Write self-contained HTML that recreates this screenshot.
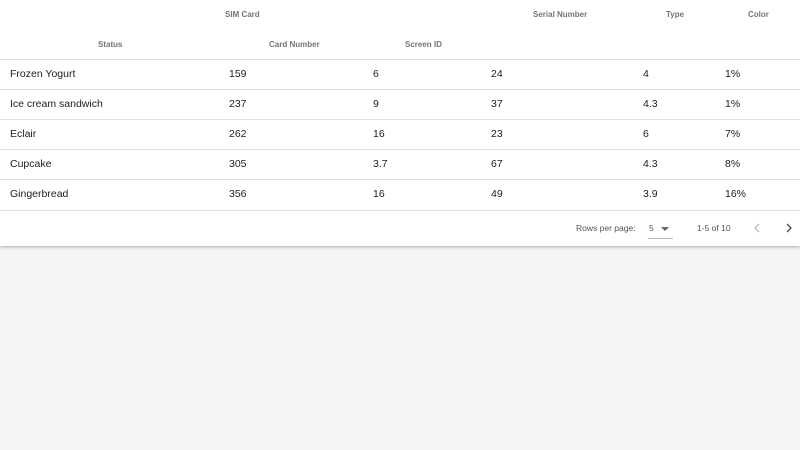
<!DOCTYPE html><html><head><style>
body{margin:0;width:800px;height:450px;background:#f5f5f5;font-family:"Liberation Sans",sans-serif;position:relative;overflow:hidden}
.card{position:absolute;left:0;top:0;width:800px;height:246px;background:#fff;box-shadow:0 1px 3px rgba(0,0,0,.3)}
.t{position:absolute;white-space:nowrap}
.h{font-size:8px;color:#757575;font-weight:bold}
.c{font-size:10.5px;color:#212121}
.l{position:absolute;left:0;width:800px;height:1px;background:#e0e0e0}
.f{font-size:8.5px;color:#555}
</style></head><body><div class="card">
<div class="t h" style="left:225px;top:10px">SIM Card</div>
<div class="t h" style="left:533px;top:10px">Serial Number</div>
<div class="t h" style="left:666px;top:10px">Type</div>
<div class="t h" style="left:748px;top:10px">Color</div>
<div class="t h" style="left:98px;top:40px">Status</div>
<div class="t h" style="left:269px;top:40px">Card Number</div>
<div class="t h" style="left:405px;top:40px">Screen ID</div>
<div class="l" style="top:59px"></div>
<div class="t c" style="left:10px;top:68px">Frozen Yogurt</div><div class="t c" style="left:229px;top:68px">159</div><div class="t c" style="left:373px;top:68px">6</div><div class="t c" style="left:491px;top:68px">24</div><div class="t c" style="left:643px;top:68px">4</div><div class="t c" style="left:725px;top:68px">1%</div>
<div class="l" style="top:89px"></div>
<div class="t c" style="left:10px;top:98px">Ice cream sandwich</div><div class="t c" style="left:229px;top:98px">237</div><div class="t c" style="left:373px;top:98px">9</div><div class="t c" style="left:491px;top:98px">37</div><div class="t c" style="left:643px;top:98px">4.3</div><div class="t c" style="left:725px;top:98px">1%</div>
<div class="l" style="top:119px"></div>
<div class="t c" style="left:10px;top:128px">Eclair</div><div class="t c" style="left:229px;top:128px">262</div><div class="t c" style="left:373px;top:128px">16</div><div class="t c" style="left:491px;top:128px">23</div><div class="t c" style="left:643px;top:128px">6</div><div class="t c" style="left:725px;top:128px">7%</div>
<div class="l" style="top:149px"></div>
<div class="t c" style="left:10px;top:158px">Cupcake</div><div class="t c" style="left:229px;top:158px">305</div><div class="t c" style="left:373px;top:158px">3.7</div><div class="t c" style="left:491px;top:158px">67</div><div class="t c" style="left:643px;top:158px">4.3</div><div class="t c" style="left:725px;top:158px">8%</div>
<div class="l" style="top:179px"></div>
<div class="t c" style="left:10px;top:188px">Gingerbread</div><div class="t c" style="left:229px;top:188px">356</div><div class="t c" style="left:373px;top:188px">16</div><div class="t c" style="left:491px;top:188px">49</div><div class="t c" style="left:643px;top:188px">3.9</div><div class="t c" style="left:725px;top:188px">16%</div>
<div class="l" style="top:210px"></div>
<div class="t f" style="left:576px;top:223px">Rows per page:</div>
<div class="t f" style="left:649px;top:223px">5</div>
<div class="t" style="left:661px;top:227px;width:0;height:0;border-left:4px solid transparent;border-right:4px solid transparent;border-top:4px solid #666"></div>
<div class="l" style="top:238px;left:648px;width:25px;background:#bbb"></div>
<div class="t f" style="left:697px;top:223px">1-5 of 10</div>
<svg class="t" style="left:752px;top:222px" width="10" height="12"><path d="M7 2L3 6L7 10" stroke="#bbb" stroke-width="1.3" fill="none"/></svg>
<svg class="t" style="left:784px;top:222px" width="10" height="12"><path d="M3 2L7 6L3 10" stroke="#444" stroke-width="1.3" fill="none"/></svg>
</div></body></html>
